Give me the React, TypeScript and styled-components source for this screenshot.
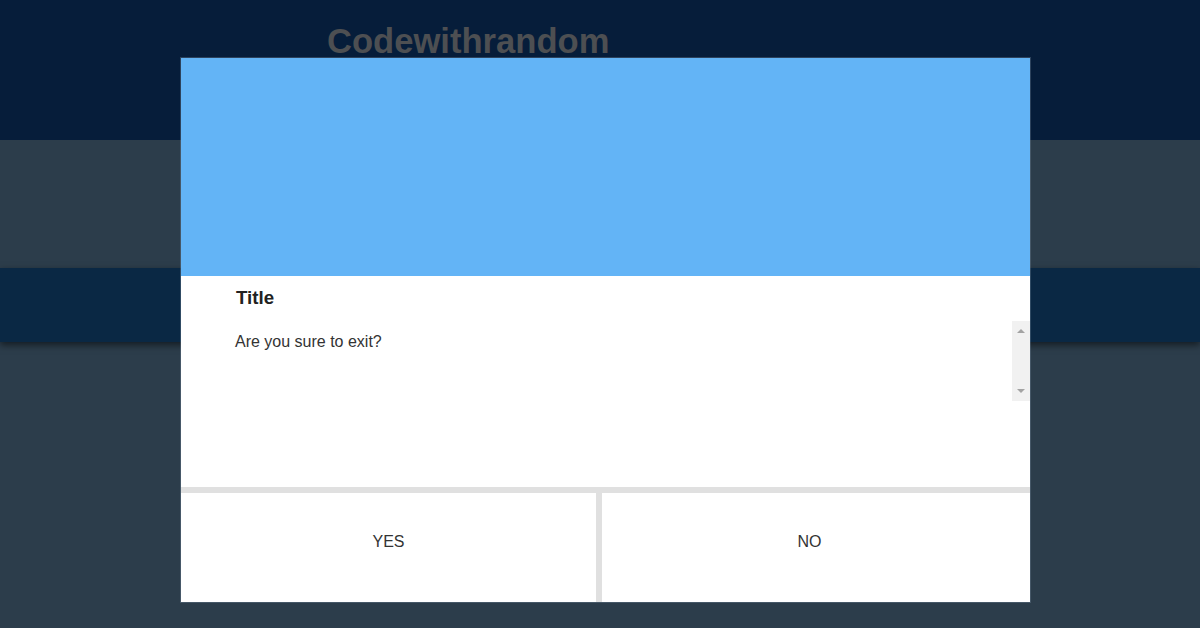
import styled, { createGlobalStyle } from "styled-components";

const GlobalStyle = createGlobalStyle`
    html, body {
        margin: 0;
        padding: 0;
        height: 100%;
        overflow: hidden;
    }
    body {
        font-family: "Liberation Sans", Arial, sans-serif;
        background-color: #2c3d4b;
    }
`;

const App = () => {
    return (
        <Page>
            <GlobalStyle />
            <Header>
                <Brand>Codewithrandom</Brand>
            </Header>
            <Hero />
            <NavBar />
            <Modal>
                <ModalBanner />
                <ModalBody>
                    <ModalTitle>Title</ModalTitle>
                    <ScrollArea>
                        <ScrollText>Are you sure to exit?</ScrollText>
                        <ScrollTrack>
                            <Arrow $dir="up" />
                            <Arrow $dir="down" />
                        </ScrollTrack>
                    </ScrollArea>
                </ModalBody>
                <ActionRow>
                    <ActionButton>YES</ActionButton>
                    <ActionButton $shift={13}>NO</ActionButton>
                </ActionRow>
            </Modal>
        </Page>
    );
};

export default App;

const Page = styled.div({
    position: "relative",
    width: "100%",
    height: "100vh",
    backgroundColor: "#2c3d4b",
    display: "flex",
    flexDirection: "column"
});

const Header = styled.header({
    height: 140,
    backgroundColor: "#061d3a",
    display: "flex",
    alignItems: "flex-start",
    paddingLeft: 327,
    boxSizing: "border-box"
});

const Brand = styled.h1({
    margin: "22px 0 0 0",
    fontSize: 34.6,
    fontWeight: 700,
    lineHeight: "38px",
    color: "#4d4f52"
});

const Hero = styled.section({
    height: 128,
    backgroundColor: "#2c3d4b"
});

const NavBar = styled.nav({
    height: 74,
    backgroundColor: "#0a2844",
    boxShadow: "0 3px 7px rgba(0, 0, 0, 0.55)",
    position: "relative",
    zIndex: 1
});

const Modal = styled.div({
    position: "absolute",
    top: 58,
    left: 181,
    width: 849,
    height: 544,
    backgroundColor: "#ffffff",
    boxShadow: "0 0 0 1px rgba(120, 140, 160, 0.35)",
    display: "flex",
    flexDirection: "column",
    zIndex: 5
});

const ModalBanner = styled.div({
    height: 218,
    backgroundColor: "#63b4f6"
});

const ModalBody = styled.div({
    height: 211,
    paddingTop: 11,
    boxSizing: "border-box",
    display: "flex",
    flexDirection: "column"
});

const ModalTitle = styled.h3({
    margin: "0 0 12px 55px",
    fontSize: 18.7,
    fontWeight: 700,
    lineHeight: "22px",
    color: "#222222"
});

const ScrollArea = styled.div({
    height: 80,
    display: "flex"
});

const ScrollText = styled.p({
    flex: 1,
    margin: 0,
    padding: "12px 0 0 54px",
    fontSize: 16,
    lineHeight: "18px",
    color: "#333333"
});

const ScrollTrack = styled.div({
    width: 18,
    backgroundColor: "#f1f1f1",
    display: "flex",
    flexDirection: "column",
    justifyContent: "space-between",
    alignItems: "center",
    padding: "8px 0 8px 0",
    boxSizing: "border-box"
});

const Arrow = styled.span<{ $dir: "up" | "down" }>(({ $dir }) => ({
    width: 0,
    height: 0,
    borderLeft: "4px solid transparent",
    borderRight: "4px solid transparent",
    borderBottom: $dir === "up" ? "4px solid #a3a3a3" : "none",
    borderTop: $dir === "down" ? "4px solid #a3a3a3" : "none"
}));

const ActionRow = styled.div({
    flex: 1,
    display: "flex",
    borderTop: "6px solid #e0e0e0"
});

const ActionButton = styled.div<{ $shift?: number }>(({ $shift }) => ({
    flex: 1,
    display: "flex",
    alignItems: "center",
    justifyContent: "center",
    paddingRight: $shift || 0,
    paddingBottom: 12,
    fontSize: 16,
    color: "#333333",
    cursor: "pointer",
    "& + &": {
        borderLeft: "6px solid #e0e0e0"
    }
}));
